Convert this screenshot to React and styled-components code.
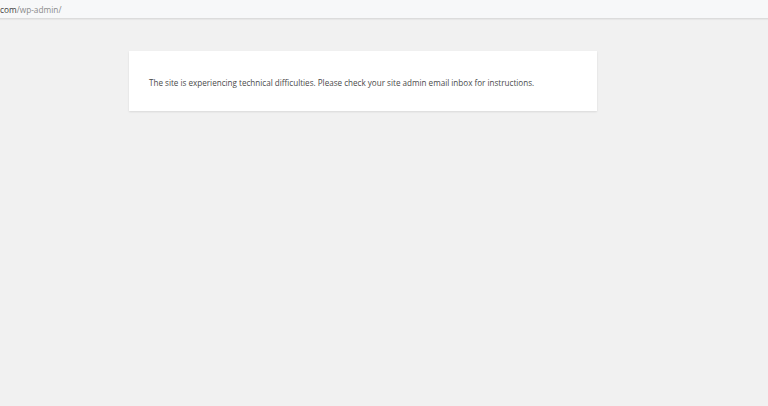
import styled, { createGlobalStyle } from 'styled-components'

const GlobalStyle = createGlobalStyle`
  html, body {
    margin: 0;
    padding: 0;
    background: #f1f1f1;
  }
  body {
    font-family: "Open Sans", "Liberation Sans", sans-serif;
  }
`

const Page = styled.div`
  width: 768px;
  height: 406px;
  background: #f1f1f1;
  overflow: hidden;
  display: flex;
  flex-direction: column;
`

const AddressBar = styled.div`
  height: 18px;
  background: #f7f8f9;
  border-bottom: 1px solid #dcdcdc;
  box-shadow: 0 1px 1px rgba(0, 0, 0, 0.04);
  display: flex;
  align-items: center;
  font-size: 8.3px;
  color: #8a8a8a;
  white-space: nowrap;
`

const Host = styled.span`
  color: #3c3c3c;
`

const Body = styled.div`
  flex: 1;
  display: flex;
  justify-content: flex-start;
  padding: 32px 0 0 129px;
`

const Card = styled.div`
  width: 468px;
  height: 60px;
  box-sizing: border-box;
  background: #fff;
  box-shadow: 0 1px 2px rgba(0, 0, 0, 0.1);
  padding: 26px 20px 0 20px;
`

const Message = styled.p`
  margin: 0;
  font-size: 8.1px;
  line-height: 12px;
  color: #4a4a4a;
  white-space: nowrap;
`

export default function App() {
  return (
    <>
      <GlobalStyle />
      <Page>
        <AddressBar>
          <Host>com</Host>/wp-admin/
        </AddressBar>
        <Body>
          <Card>
            <Message>
              The site is experiencing technical difficulties. Please check your site admin email inbox for instructions.
            </Message>
          </Card>
        </Body>
      </Page>
    </>
  )
}
